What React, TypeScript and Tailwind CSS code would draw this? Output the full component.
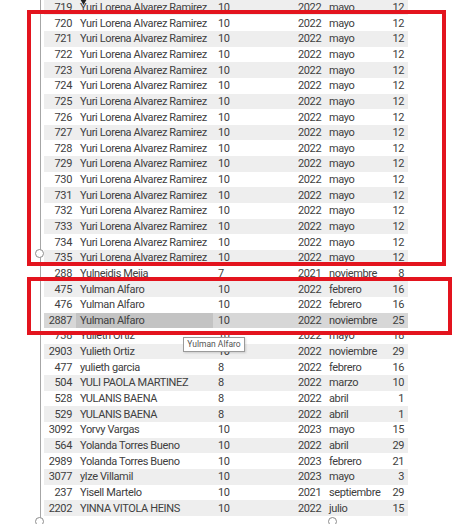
import React from "react";

const Y = "Yuri Lorena Alvarez Ramirez";
const rows: string[][] = [
  ["719", Y, "10", "2022", "mayo", "12"],
  ["720", Y, "10", "2022", "mayo", "12"],
  ["721", Y, "10", "2022", "mayo", "12"],
  ["722", Y, "10", "2022", "mayo", "12"],
  ["723", Y, "10", "2022", "mayo", "12"],
  ["724", Y, "10", "2022", "mayo", "12"],
  ["725", Y, "10", "2022", "mayo", "12"],
  ["726", Y, "10", "2022", "mayo", "12"],
  ["727", Y, "10", "2022", "mayo", "12"],
  ["728", Y, "10", "2022", "mayo", "12"],
  ["729", Y, "10", "2022", "mayo", "12"],
  ["730", Y, "10", "2022", "mayo", "12"],
  ["731", Y, "10", "2022", "mayo", "12"],
  ["732", Y, "10", "2022", "mayo", "12"],
  ["733", Y, "10", "2022", "mayo", "12"],
  ["734", Y, "10", "2022", "mayo", "12"],
  ["735", Y, "10", "2022", "mayo", "12"],
  ["288", "Yulneidis Mejia", "7", "2021", "noviembre", "8"],
  ["475", "Yulman Alfaro", "10", "2022", "febrero", "16"],
  ["476", "Yulman Alfaro", "10", "2022", "febrero", "16"],
  ["2887", "Yulman Alfaro", "10", "2022", "noviembre", "25"],
  ["738", "Yulieth Ortiz", "10", "2022", "mayo", "18"],
  ["2903", "Yulieth Ortiz", "10", "2022", "noviembre", "29"],
  ["477", "yulieth garcia", "8", "2022", "febrero", "16"],
  ["504", "YULI PAOLA MARTINEZ", "8", "2022", "marzo", "10"],
  ["528", "YULANIS BAENA", "8", "2022", "abril", "1"],
  ["529", "YULANIS BAENA", "8", "2022", "abril", "1"],
  ["3092", "Yorvy Vargas", "10", "2023", "mayo", "15"],
  ["564", "Yolanda Torres Bueno", "10", "2022", "abril", "29"],
  ["2989", "Yolanda Torres Bueno", "10", "2023", "febrero", "21"],
  ["3077", "ylze Villamil", "10", "2023", "mayo", "3"],
  ["237", "Yisell Martelo", "10", "2021", "septiembre", "29"],
  ["2202", "YINNA VITOLA HEINS", "10", "2022", "julio", "15"],
];

export default function App() {
  return (
    <div
      className="relative w-[474px] h-[524px] overflow-hidden bg-white"
      style={{ fontFamily: 'Roboto, "Open Sans", sans-serif' }}
    >
      <div className="flex flex-col pl-[44px] mt-[-0.3px]">
        {rows.map((r, i) => {
          const sel = r[0] === "2887";
          const bg = sel ? "bg-[#d7d7d7]" : i % 2 === 0 ? "bg-[#eeeeee]" : "bg-white";
          return (
            <div
              key={i}
              className={`flex w-[364px] h-[15.65px] items-center text-[11px] tracking-[-0.37px] leading-none text-[#404040] whitespace-nowrap ${bg}`}
            >
              <div className="w-[32px] shrink-0 text-right pr-[4px]">{r[0]}</div>
              <div
                className={`w-[137px] shrink-0 h-full flex items-center pl-[4px] overflow-hidden ${sel ? "bg-[#c3c3c3]" : ""}`}
              >
                {r[1]}
              </div>
              <div className="w-[81px] shrink-0 pl-[5px]">{r[2]}</div>
              <div className="w-[31px] shrink-0 pl-[4px]">{r[3]}</div>
              <div className="flex-1 min-w-0 pl-[4px]">{r[4]}</div>
              <div className="w-[30px] shrink-0 text-right pr-[4px]">{r[5]}</div>
            </div>
          );
        })}
      </div>

      {/* visual border line */}
      <div className="absolute left-[39.5px] top-0 h-[518px] w-px bg-[#a6a6a6]" />

      {/* top handle */}
      <svg className="absolute left-[79px] top-[-2px]" width="9" height="8" viewBox="0 0 9 8">
        <path d="M0.5 0 H8.5 L4.5 7 Z" fill="#222" />
      </svg>

      {/* resize handles */}
      <div className="absolute left-[35px] top-[249px] w-[9px] h-[9px] rounded-full border border-[#8c8c8c] bg-white" />
      <div className="absolute left-[35px] top-[517px] w-[9px] h-[9px] rounded-full border border-[#8c8c8c] bg-white" />
      <div className="absolute left-[328px] top-[517px] w-[9px] h-[9px] rounded-full border border-[#8c8c8c] bg-white" />

      {/* red highlight boxes */}
      <div className="absolute left-[27px] top-[10px] w-[419px] h-[256px] border-[4px] border-[#e3141e]" />
      <div className="absolute left-[27px] top-[277px] w-[425px] h-[58px] border-[4px] border-[#e3141e]" />

      {/* tooltip */}
      <div className="absolute left-[183px] top-[337px] w-[62px] h-[15px] border border-[#9a9a9a] bg-white flex items-center justify-center text-[8.5px] text-[#555] leading-none whitespace-nowrap shadow-[1px_1px_2px_rgba(0,0,0,0.15)]">
        Yulman Alfaro
      </div>
    </div>
  );
}
